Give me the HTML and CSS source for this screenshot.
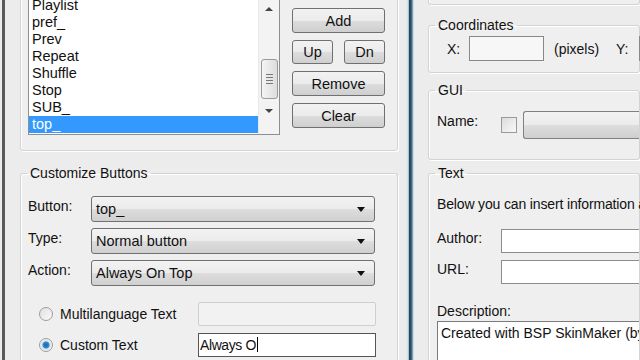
FILE: index.html
```html
<!DOCTYPE html>
<html lang="en">
<head>
<meta charset="UTF-8">
<title>BSP SkinMaker — Buttons</title>
<link rel="stylesheet" href="styles.css">
</head>
<body>
<div class="app">
  <div class="pane left">
    <div class="edge"></div>
    <div class="pane-body">
      <div class="group group-list">
        <div class="listbox">
          <div class="items">
            <div class="item">Playlist</div>
            <div class="item">pref_</div>
            <div class="item">Prev</div>
            <div class="item">Repeat</div>
            <div class="item">Shuffle</div>
            <div class="item">Stop</div>
            <div class="item">SUB_</div>
            <div class="item selected">top_</div>
          </div>
          <div class="scrollbar">
            <span class="arrow up"></span>
            <span class="thumb"><i></i><i></i><i></i><i></i></span>
            <span class="arrow down"></span>
          </div>
        </div>
        <div class="btns">
          <button class="btn">Add</button>
          <div class="btn-pair"><button class="btn">Up</button><button class="btn">Dn</button></div>
          <button class="btn">Remove</button>
          <button class="btn">Clear</button>
        </div>
      </div>

      <fieldset class="group group-custom">
        <legend>Customize Buttons</legend>
        <div class="gbody">
          <div class="row"><label>Button:</label><div class="combo">top_</div></div>
          <div class="row"><label>Type:</label><div class="combo">Normal button</div></div>
          <div class="row"><label>Action:</label><div class="combo">Always On Top</div></div>
          <div class="radios">
            <div class="radio-row"><span class="radio"></span><span class="radio-label">Multilanguage Text</span><div class="textbox disabled"></div></div>
            <div class="radio-row"><span class="radio checked"></span><span class="radio-label">Custom Text</span><div class="textbox active">Always O<span class="caret"></span></div></div>
          </div>
        </div>
      </fieldset>
    </div>
  </div>

  <div class="divider"></div>

  <div class="pane right">
    <div class="group group-prev"></div>

    <fieldset class="group group-coords">
      <legend>Coordinates</legend>
      <div class="gbody coords">
        <span class="xlabel">X:</span><div class="textbox small"></div>
        <span class="unit">(pixels)</span>
        <span class="ylabel">Y:</span><div class="textbox small"></div>
      </div>
    </fieldset>

    <fieldset class="group group-gui">
      <legend>GUI</legend>
      <div class="gbody gui-row">
        <label>Name:</label><span class="check"></span><div class="wide-btn"></div>
      </div>
    </fieldset>

    <fieldset class="group group-text">
      <legend>Text</legend>
      <div class="gbody">
        <div class="intro">Below you can insert information about the skin</div>
        <div class="row2 first"><label>Author:</label><div class="textbox"></div></div>
        <div class="row2"><label>URL:</label><div class="textbox"></div></div>
        <div class="desc-label">Description:</div>
        <div class="textarea">Created with BSP SkinMaker (by Fabrizio Dinnocenzo)</div>
      </div>
    </fieldset>
  </div>
</div>
</body>
</html>
```

FILE: styles.css
```css
*{margin:0;padding:0;box-sizing:border-box}
html,body{width:640px;height:360px;overflow:hidden}
body{background:#ececec;font-family:'Liberation Sans',Arial,sans-serif;font-size:14px;color:#111}
.app{display:flex;height:360px}

/* panes */
.pane{height:360px;overflow:hidden}
.left{width:406px;display:flex}
.edge{width:3px;margin-left:2px;background:#5a5a5a;flex-shrink:0}
.pane-body{flex:1;padding-left:15px;padding-right:8px}
.divider{width:9px;flex-shrink:0;background:linear-gradient(90deg,#e3ecf2 0,#cfe0ea 25%,#1d3a4e 40%,#2d5068 55%,#6c93a8 70%,#d8e6ee 85%,#eef2f4 100%)}
.right{flex:1;padding-left:13px}

/* group boxes */
.group{border:1px solid #d3d3d3;border-radius:3px;box-shadow:inset 1px 1px 0 #fff,1px 1px 0 #fff;background:#efefef}
fieldset.group{min-width:0;padding:0}
legend{padding:0 3px;margin-left:6px;font-size:14px;line-height:16px}
.gbody{padding-left:7px}

.group-list{height:175px;margin-top:-24px;display:flex;align-items:flex-start;padding:14px 0 0 7px}
.listbox{width:252px;height:144px;background:#fff;border:1px solid #8e8f8f;border-top:none;display:flex}
.items{flex:1;display:flex;flex-direction:column;justify-content:flex-end;overflow:hidden;padding-bottom:1px}
.item{height:17px;line-height:17px;padding-left:3px;font-size:14.5px}
.item.selected{background:#3399ff;color:#fff}
.scrollbar{width:21px;background:#f3f3f3;border-left:1px solid #e8e8e8;display:flex;flex-direction:column;align-items:center;padding-top:16px}
.arrow{width:0;height:0;border-left:4px solid transparent;border-right:4px solid transparent}
.arrow.up{border-bottom:4px solid #444;margin-bottom:48px}
.arrow.down{border-top:4px solid #444;margin-top:10px}
.thumb{width:17px;height:40px;border:1px solid #9a9a9a;border-radius:3px;background:linear-gradient(90deg,#f4f4f4,#dcdcdc);display:flex;flex-direction:column;align-items:center;justify-content:center;gap:2px}
.thumb i{display:block;width:7px;height:1px;background:#777}

.btns{margin-left:12px;margin-top:17px;width:93px;display:flex;flex-direction:column;gap:7px}
.btn{height:25px;width:100%;border:1px solid #707070;border-radius:3px;background:linear-gradient(#f2f2f2 0,#ebebeb 50%,#dddddd 51%,#cfcfcf 100%);font-family:inherit;font-size:14.5px;color:#111}
.btn-pair{display:flex;justify-content:space-between}
.btn-pair .btn{width:41px;height:24px}

.group-custom{margin-top:14px;height:200px;border-bottom:none}
.group-custom .gbody{padding-top:15px}
.row{display:flex;align-items:center;height:26px;margin-bottom:6px}
.row label{width:63px;margin-top:-7px}
.combo{width:284px;height:26px;border:1px solid #707070;border-radius:3px;background:linear-gradient(#f3f3f3 0,#ebebeb 50%,#dddddd 51%,#d0d0d0 100%);line-height:24px;padding-left:4px;position:relative;font-size:14.5px}
.combo::after{content:'';position:absolute;right:9px;top:10px;border-left:4px solid transparent;border-right:4px solid transparent;border-top:5px solid #111}
.radios{margin-top:16px;display:flex;flex-direction:column;gap:7px}
.radio-row{display:flex;align-items:center;height:24px;padding-left:11px}
.radio{width:14px;height:14px;border-radius:50%;border:1px solid #9c9c9c;background:linear-gradient(135deg,#e0e0e0,#fafafa);flex-shrink:0}
.radio.checked{background:radial-gradient(circle,#1f5f9a 0,#3a8ad0 3px,#cfe2f3 4px,#f4f4f4 6px)}
.radio-label{width:145px;padding-left:7px}
.textbox{height:24px;border:1px solid #adb2b5;background:#fff;flex-shrink:0}
.radio-row .textbox{width:178px}
.textbox.disabled{background:#f2f2f2;border-color:#cfcfcf;border-radius:2px}
.textbox.active{border-color:#555;padding-left:1px;line-height:22px;font-size:14px;letter-spacing:-0.4px}
.caret{display:inline-block;width:1px;height:15px;background:#000;vertical-align:-2px;margin-left:1px}

/* right pane */
.group-prev{height:30px;margin-top:-25px;border-top:none}
.group-coords{margin-top:12px;height:56px}
.coords{display:flex;align-items:center;margin-top:3px;padding-left:8px}
.coords > *{flex-shrink:0}
.xlabel{width:32px;padding-left:10px}
.textbox.small{width:75px;height:25px;border-color:#888;background:#f7f7f7}
.unit{margin-left:10px;width:62px}
.ylabel{width:23px}
.group-gui{margin-top:9px;height:78px}
.gui-row{display:flex;align-items:center;margin-top:13px;padding-left:8px}
.gui-row label{width:64px;margin-top:-8px}
.check{width:16px;height:16px;border:1px solid #9a9a9a;background:linear-gradient(135deg,#dcdcdc,#f8f8f8);flex-shrink:0}
.wide-btn{flex:1;margin-left:6px;height:28px;border:1px solid #808080;border-radius:3px 0 0 3px;border-right:none;background:linear-gradient(#f3f3f3 0,#ebebeb 50%,#dddddd 51%,#cfcfcf 100%)}
.group-text{margin-top:5px;height:200px;border-bottom:none}
.group-text .gbody{padding-left:8px}
.intro{margin-top:15px;white-space:nowrap;letter-spacing:-0.15px}
.row2{display:flex;align-items:center;height:24px;margin-top:7px}
.row2 label{width:64px;margin-top:-6px;flex-shrink:0}
.row2 .textbox{flex:1;border-color:#8c8c8c;border-right:none}
.row2.first{margin-top:17px}
.desc-label{margin-top:19px}
.textarea{margin-top:2px;height:50px;background:#fff;border:1px solid #7a7a7a;border-right:none;padding:3px 3px;white-space:nowrap;overflow:hidden}
```
